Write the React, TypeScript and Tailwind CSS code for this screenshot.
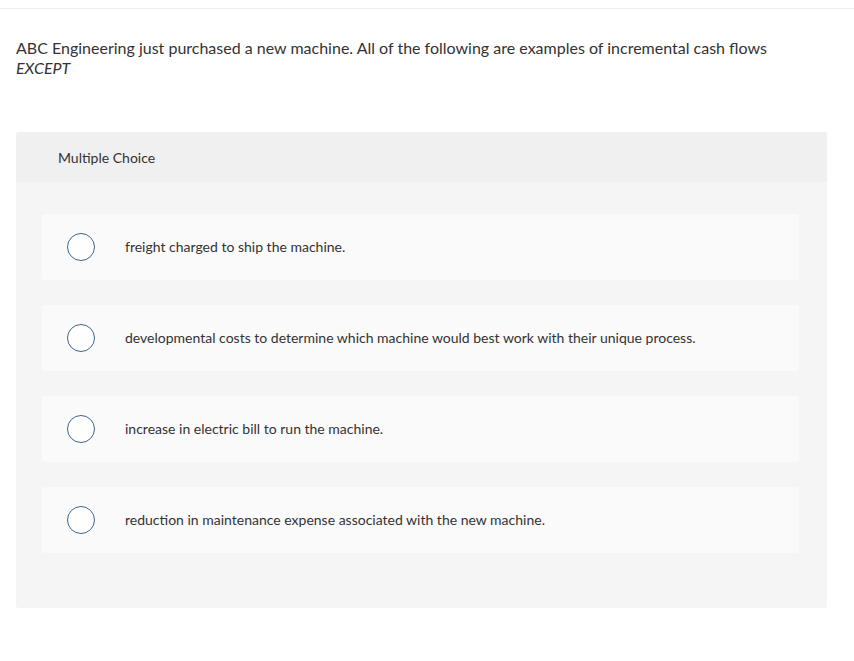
import React from "react";

const options = [
  "freight charged to ship the machine.",
  "developmental costs to determine which machine would best work with their unique process.",
  "increase in electric bill to run the machine.",
  "reduction in maintenance expense associated with the new machine.",
];

export default function App() {
  return (
    <div className="w-[854px] h-[661px] bg-white text-[#333]" style={{ fontFamily: "Lato, 'Open Sans', sans-serif" }}>
      <div className="h-[8px]" />
      <div className="border-t border-[#ececec]" />
      <div className="px-[16px] pt-[29px] text-[16px] leading-[20px] text-[#333]">
        <p>ABC Engineering just purchased a new machine. All of the following are examples of incremental cash flows</p>
        <p className="italic">EXCEPT</p>
      </div>
      <div className="mx-[16px] mt-[54px] w-[811px] rounded-[3px] bg-[#f5f5f5] overflow-hidden">
        <div className="h-[50px] bg-[#f0f0f0] flex items-center pl-[42px] text-[14px] text-[#333]">Multiple Choice</div>
        <div className="pt-[32px] pb-[55px] pl-[26px] pr-[28px] flex flex-col gap-[25px]">
          {options.map((o) => (
            <div key={o} className="h-[66px] rounded-[3px] bg-[#fafafa] flex items-center">
              <div className="ml-[25px] w-[28px] h-[28px] rounded-full border-[1.5px] border-[#3c6590] bg-white shrink-0" />
              <div className="ml-[30px] text-[14px] leading-[18px] text-[#333] -mt-[1px]">{o}</div>
            </div>
          ))}
        </div>
      </div>
    </div>
  );
}
